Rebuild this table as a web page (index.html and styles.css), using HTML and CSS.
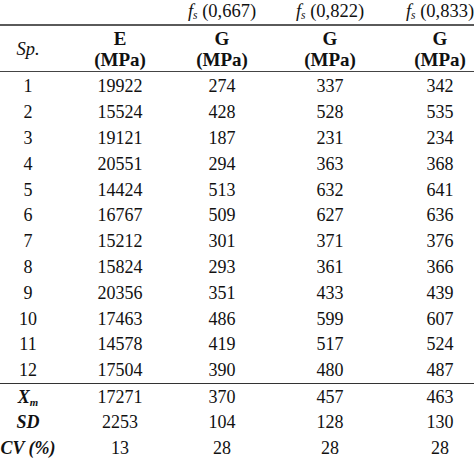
FILE: index.html
```html
<!DOCTYPE html>
<html>
<head>
<meta charset="utf-8">
<link rel="stylesheet" href="styles.css">
</head>
<body>
<div class="tbl">
  <div class="row top">
    <div></div><div></div>
    <div><span><i>f<sub>s</sub></i> (0,667)</span></div>
    <div><span><i>f<sub>s</sub></i> (0,822)</span></div>
    <div><span><i>f<sub>s</sub></i> (0,833)</span></div>
  </div>
  <div class="row head">
    <div class="sp"><i>Sp.</i></div>
    <div><b>E<br>(MPa)</b></div>
    <div><b>G<br>(MPa)</b></div>
    <div><b>G<br>(MPa)</b></div>
    <div><b>G<br>(MPa)</b></div>
  </div>
  <div class="body">
    <div class="row d"><div>1</div><div>19922</div><div>274</div><div>337</div><div>342</div></div>
    <div class="row d"><div>2</div><div>15524</div><div>428</div><div>528</div><div>535</div></div>
    <div class="row d"><div>3</div><div>19121</div><div>187</div><div>231</div><div>234</div></div>
    <div class="row d"><div>4</div><div>20551</div><div>294</div><div>363</div><div>368</div></div>
    <div class="row d"><div>5</div><div>14424</div><div>513</div><div>632</div><div>641</div></div>
    <div class="row d"><div>6</div><div>16767</div><div>509</div><div>627</div><div>636</div></div>
    <div class="row d"><div>7</div><div>15212</div><div>301</div><div>371</div><div>376</div></div>
    <div class="row d"><div>8</div><div>15824</div><div>293</div><div>361</div><div>366</div></div>
    <div class="row d"><div>9</div><div>20356</div><div>351</div><div>433</div><div>439</div></div>
    <div class="row d"><div>10</div><div>17463</div><div>486</div><div>599</div><div>607</div></div>
    <div class="row d"><div>11</div><div>14578</div><div>419</div><div>517</div><div>524</div></div>
    <div class="row d"><div>12</div><div>17504</div><div>390</div><div>480</div><div>487</div></div>
  </div>
  <div class="summary">
    <div class="row s"><div><b><i>X<sub>m</sub></i></b></div><div>17271</div><div>370</div><div>457</div><div>463</div></div>
    <div class="row s"><div><b><i>SD</i></b></div><div>2253</div><div>104</div><div>128</div><div>130</div></div>
    <div class="row s"><div><span><b><i>CV (%)</i></b></span></div><div>13</div><div>28</div><div>28</div><div>28</div></div>
  </div>
</div>
</body>
</html>
```

FILE: styles.css
```css
html, body {
  margin: 0;
  padding: 0;
  background: #ffffff;
  overflow: hidden;
}
body {
  width: 474px;
  height: 460px;
  font-family: "Liberation Serif", "Times New Roman", serif;
  font-size: 18px;
  color: #111111;
}
.tbl {
  width: 474px;
}
.row {
  display: grid;
  grid-template-columns: 56px 128px 76px 140px 80px;
  text-align: center;
  white-space: nowrap;
}
.row > div {
  display: flex;
  align-items: center;
  justify-content: center;
}
.top {
  height: 24px;
  border-bottom: 2px solid #5a5a5a;
  font-size: 18.5px;
}
.top > div {
  padding-bottom: 1px;
}
sub {
  font-size: 0.62em;
  vertical-align: -0.2em;
  line-height: 0;
}
.head {
  height: 45px;
  border-bottom: 1.5px solid #444444;
  line-height: 21px;
  font-size: 19px;
}
.head b {
  display: block;
}
.head .sp {
  padding-top: 2px;
  font-size: 18.5px;
}
.body {
  padding-top: 1px;
  border-bottom: 1px solid #333333;
}
.d {
  height: 25.8px;
}
.s {
  height: 25.5px;
}
.d > div, .s > div {
  padding-top: 2px;
}
.s sub {
  font-size: 0.6em;
  vertical-align: -0.25em;
}
```
